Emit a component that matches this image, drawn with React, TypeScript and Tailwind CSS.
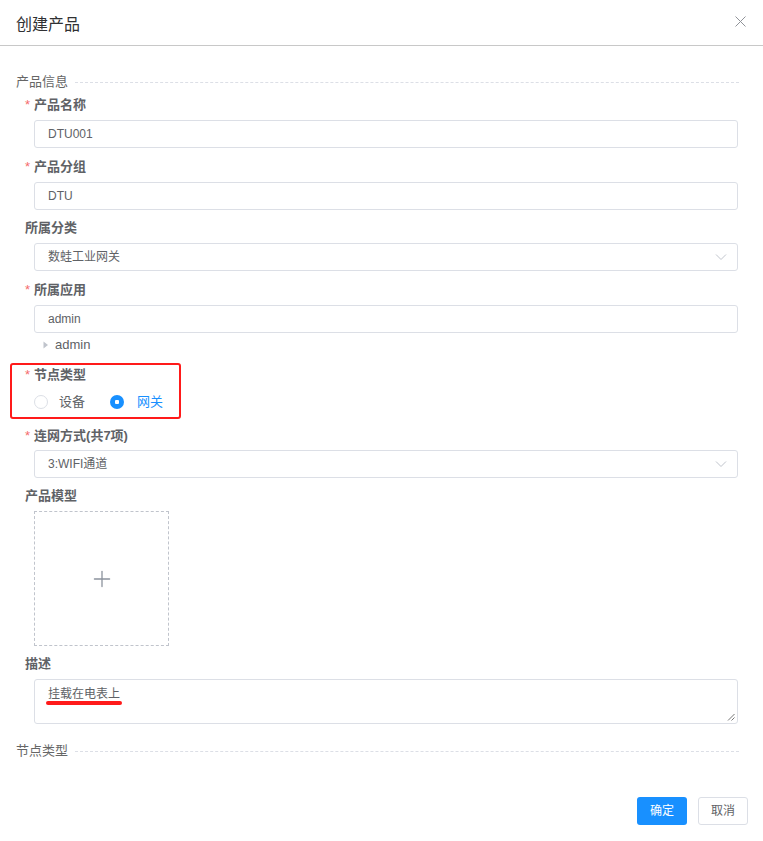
import { Plus } from "lucide-react";

const FONT = "font-['Liberation_Sans','Noto_Sans_CJK_SC',sans-serif]";

function SectionTitle({ text, className }: { text: string; className?: string }) {
  return (
    <div className={`flex h-4 items-center pl-4 pr-[24px] ${className ?? ""}`}>
      <span className="text-[13px] leading-4 text-[#666]">{text}</span>
      <div className="ml-[7px] flex-1 border-t border-dashed border-[#dcdfe6]" />
    </div>
  );
}

function Label({ text, required, className }: { text: string; required?: boolean; className?: string }) {
  return (
    <div className={`flex h-5 items-center text-[13px] font-bold leading-5 text-[#606266] ${className ?? ""}`}>
      {required && <span className="mr-[4px] font-normal text-[#f56c6c]">*</span>}
      <span>{text}</span>
    </div>
  );
}

function TextInput({ value, select, className }: { value: string; select?: boolean; className?: string }) {
  return (
    <div
      className={`ml-[34px] mr-[25px] flex h-[28px] items-center justify-between rounded-[3px] border border-[#dcdfe6] pl-[13px] pr-[10px] text-[12px] text-[#606266] ${className ?? ""}`}
    >
      <span>{value}</span>
      {select && (
        <svg width="12" height="8" viewBox="0 0 12 8" fill="none">
          <path d="M1 1.5 6 6.5 11 1.5" stroke="#c0c4cc" strokeWidth="1" />
        </svg>
      )}
    </div>
  );
}

export default function App() {
  return (
    <div className={`relative h-[841px] w-[763px] bg-white ${FONT}`}>
      {/* header */}
      <div className="flex h-[46px] items-center justify-between border-b border-[#c8c8c8] pl-4 pr-[17px] pt-[5px]">
        <span className="text-[16px] text-[#303133]">创建产品</span>
        <svg width="11" height="11" viewBox="0 0 11 11" className="mb-[7px]">
          <path d="M0.5 0.5 10.5 10.5M10.5 0.5 0.5 10.5" stroke="#909399" strokeWidth="1" />
        </svg>
      </div>

      <SectionTitle text="产品信息" className="mt-[28px]" />

      <div className="pl-[25px]">
        <Label text="产品名称" required className="mt-[5px]" />
      </div>
      <TextInput value="DTU001" className="mt-[5px]" />

      <div className="pl-[25px]">
        <Label text="产品分组" required className="mt-[9px]" />
      </div>
      <TextInput value="DTU" className="mt-[5px]" />

      <div className="pl-[25px]">
        <Label text="所属分类" className="mt-[8px]" />
      </div>
      <TextInput value="数蛙工业网关" select className="mt-[5px]" />

      <div className="pl-[25px]">
        <Label text="所属应用" required className="mt-[9px]" />
      </div>
      <TextInput value="admin" className="mt-[5px]" />
      <div className="ml-[43px] mt-[2px] flex h-5 items-center text-[13px] text-[#606266]">
        <svg width="6" height="8" viewBox="0 0 6 8" className="mr-[6px]">
          <path d="M0.5 0.5 5 4 0.5 7.5Z" fill="#c0c4cc" />
        </svg>
        <span>admin</span>
      </div>

      {/* highlighted radio group */}
      <div className="ml-[10px] mt-[8px] h-[56px] w-[171px] rounded-[3px] border-2 border-[#ff1a1a] pl-[13px]">
        <Label text="节点类型" required />
        <div className="mt-[7px] flex h-5 items-center text-[13px]">
          <span className="ml-[9px] h-[14px] w-[14px] rounded-full border border-[#dcdfe6] bg-white" />
          <span className="ml-[11px] text-[#606266]">设备</span>
          <span className="ml-[25px] flex h-[14px] w-[14px] items-center justify-center rounded-full bg-[#1890ff]">
            <span className="h-[4px] w-[4px] rounded-[1px] bg-white" />
          </span>
          <span className="ml-[13px] text-[#1890ff]">网关</span>
        </div>
      </div>

      <div className="pl-[25px]">
        <Label text="连网方式(共7项)" required className="mt-[7px]" />
      </div>
      <TextInput value="3:WIFI通道" select className="mt-[4px]" />

      <div className="pl-[25px]">
        <Label text="产品模型" className="mt-[8px]" />
      </div>
      <div className="ml-[34px] mt-[5px] flex h-[135px] w-[135px] items-center justify-center border border-dashed border-[#c0c4cc]">
        <Plus className="h-[26px] w-[26px] text-[#8c939d]" strokeWidth={1.2} />
      </div>

      <div className="pl-[25px]">
        <Label text="描述" className="mt-[8px]" />
      </div>
      <div className="relative ml-[34px] mr-[25px] mt-[5px] h-[45px] rounded-[3px] border border-[#dcdfe6] pl-[13px] pt-[4px] text-[12px] leading-5 text-[#606266]">
        <span>挂载在电表上</span>
        <div className="absolute left-[11px] top-[21px] h-[4px] w-[76px] rounded-full bg-[#ff1a1a]" />
        <svg width="8" height="8" viewBox="0 0 8 8" className="absolute bottom-[2px] right-[2px]">
          <path d="M7.5 1 1 7.5M7.5 4.5 4.5 7.5" stroke="#777" strokeWidth="1" />
        </svg>
      </div>

      <SectionTitle text="节点类型" className="mt-[19px]" />

      {/* footer */}
      <div className="mt-[38px] flex justify-end gap-[11px] pr-[15px]">
        <button className="h-[28px] w-[50px] rounded-[3px] bg-[#1890ff] text-[12px] text-white">确定</button>
        <button className="h-[28px] w-[50px] rounded-[3px] border border-[#dcdfe6] bg-white text-[12px] text-[#606266]">
          取消
        </button>
      </div>
    </div>
  );
}
